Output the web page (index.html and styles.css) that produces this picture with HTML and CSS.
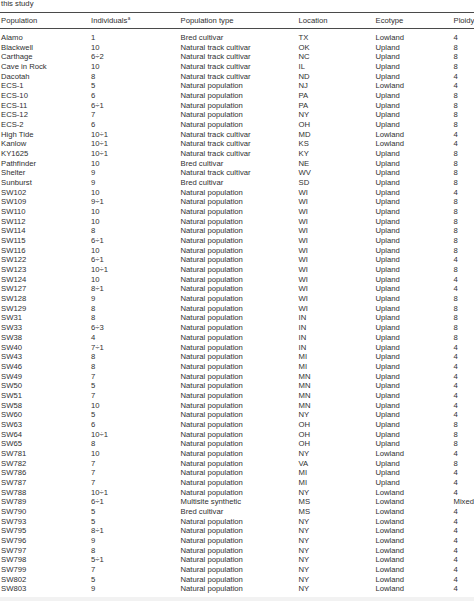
FILE: index.html
```html
<!DOCTYPE html>
<html lang="en">
<head>
<meta charset="utf-8">
<title>Switchgrass populations used in this study</title>
<link rel="stylesheet" href="styles.css">
</head>
<body>
<div class="page">
  <div class="caption">this study</div>
  <div class="table">
    <div class="row head">
      <span>Population</span><span>Individuals<sup>a</sup></span><span>Population type</span><span>Location</span><span>Ecotype</span><span>Ploidy</span>
    </div>
    <div class="body">
      <div class="row"><span>Alamo</span><span>1</span><span>Bred cultivar</span><span>TX</span><span>Lowland</span><span>4</span></div>
      <div class="row"><span>Blackwell</span><span>10</span><span>Natural track cultivar</span><span>OK</span><span>Upland</span><span>8</span></div>
      <div class="row"><span>Carthage</span><span>6÷2</span><span>Natural track cultivar</span><span>NC</span><span>Upland</span><span>8</span></div>
      <div class="row"><span>Cave in Rock</span><span>10</span><span>Natural track cultivar</span><span>IL</span><span>Upland</span><span>8</span></div>
      <div class="row"><span>Dacotah</span><span>8</span><span>Natural track cultivar</span><span>ND</span><span>Upland</span><span>4</span></div>
      <div class="row"><span>ECS-1</span><span>5</span><span>Natural population</span><span>NJ</span><span>Lowland</span><span>4</span></div>
      <div class="row"><span>ECS-10</span><span>6</span><span>Natural population</span><span>PA</span><span>Upland</span><span>8</span></div>
      <div class="row"><span>ECS-11</span><span>6÷1</span><span>Natural population</span><span>PA</span><span>Upland</span><span>8</span></div>
      <div class="row"><span>ECS-12</span><span>7</span><span>Natural population</span><span>NY</span><span>Upland</span><span>8</span></div>
      <div class="row"><span>ECS-2</span><span>6</span><span>Natural population</span><span>OH</span><span>Upland</span><span>8</span></div>
      <div class="row"><span>High Tide</span><span>10÷1</span><span>Natural track cultivar</span><span>MD</span><span>Lowland</span><span>4</span></div>
      <div class="row"><span>Kanlow</span><span>10÷1</span><span>Natural track cultivar</span><span>KS</span><span>Lowland</span><span>4</span></div>
      <div class="row"><span>KY1625</span><span>10÷1</span><span>Natural track cultivar</span><span>KY</span><span>Upland</span><span>8</span></div>
      <div class="row"><span>Pathfinder</span><span>10</span><span>Bred cultivar</span><span>NE</span><span>Upland</span><span>8</span></div>
      <div class="row"><span>Shelter</span><span>9</span><span>Natural track cultivar</span><span>WV</span><span>Upland</span><span>8</span></div>
      <div class="row"><span>Sunburst</span><span>9</span><span>Bred cultivar</span><span>SD</span><span>Upland</span><span>8</span></div>
      <div class="row"><span>SW102</span><span>10</span><span>Natural population</span><span>WI</span><span>Upland</span><span>4</span></div>
      <div class="row"><span>SW109</span><span>9÷1</span><span>Natural population</span><span>WI</span><span>Upland</span><span>8</span></div>
      <div class="row"><span>SW110</span><span>10</span><span>Natural population</span><span>WI</span><span>Upland</span><span>8</span></div>
      <div class="row"><span>SW112</span><span>10</span><span>Natural population</span><span>WI</span><span>Upland</span><span>8</span></div>
      <div class="row"><span>SW114</span><span>8</span><span>Natural population</span><span>WI</span><span>Upland</span><span>8</span></div>
      <div class="row"><span>SW115</span><span>6÷1</span><span>Natural population</span><span>WI</span><span>Upland</span><span>8</span></div>
      <div class="row"><span>SW116</span><span>10</span><span>Natural population</span><span>WI</span><span>Upland</span><span>8</span></div>
      <div class="row"><span>SW122</span><span>6÷1</span><span>Natural population</span><span>WI</span><span>Upland</span><span>4</span></div>
      <div class="row"><span>SW123</span><span>10÷1</span><span>Natural population</span><span>WI</span><span>Upland</span><span>8</span></div>
      <div class="row"><span>SW124</span><span>10</span><span>Natural population</span><span>WI</span><span>Upland</span><span>4</span></div>
      <div class="row"><span>SW127</span><span>8÷1</span><span>Natural population</span><span>WI</span><span>Upland</span><span>4</span></div>
      <div class="row"><span>SW128</span><span>9</span><span>Natural population</span><span>WI</span><span>Upland</span><span>8</span></div>
      <div class="row"><span>SW129</span><span>8</span><span>Natural population</span><span>WI</span><span>Upland</span><span>8</span></div>
      <div class="row"><span>SW31</span><span>8</span><span>Natural population</span><span>IN</span><span>Upland</span><span>8</span></div>
      <div class="row"><span>SW33</span><span>6÷3</span><span>Natural population</span><span>IN</span><span>Upland</span><span>8</span></div>
      <div class="row"><span>SW38</span><span>4</span><span>Natural population</span><span>IN</span><span>Upland</span><span>8</span></div>
      <div class="row"><span>SW40</span><span>7÷1</span><span>Natural population</span><span>IN</span><span>Upland</span><span>4</span></div>
      <div class="row"><span>SW43</span><span>8</span><span>Natural population</span><span>MI</span><span>Upland</span><span>4</span></div>
      <div class="row"><span>SW46</span><span>8</span><span>Natural population</span><span>MI</span><span>Upland</span><span>4</span></div>
      <div class="row"><span>SW49</span><span>7</span><span>Natural population</span><span>MN</span><span>Upland</span><span>4</span></div>
      <div class="row"><span>SW50</span><span>5</span><span>Natural population</span><span>MN</span><span>Upland</span><span>4</span></div>
      <div class="row"><span>SW51</span><span>7</span><span>Natural population</span><span>MN</span><span>Upland</span><span>4</span></div>
      <div class="row"><span>SW58</span><span>10</span><span>Natural population</span><span>MN</span><span>Upland</span><span>4</span></div>
      <div class="row"><span>SW60</span><span>5</span><span>Natural population</span><span>NY</span><span>Upland</span><span>4</span></div>
      <div class="row"><span>SW63</span><span>6</span><span>Natural population</span><span>OH</span><span>Upland</span><span>8</span></div>
      <div class="row"><span>SW64</span><span>10÷1</span><span>Natural population</span><span>OH</span><span>Upland</span><span>8</span></div>
      <div class="row"><span>SW65</span><span>8</span><span>Natural population</span><span>OH</span><span>Upland</span><span>8</span></div>
      <div class="row"><span>SW781</span><span>10</span><span>Natural population</span><span>NY</span><span>Lowland</span><span>4</span></div>
      <div class="row"><span>SW782</span><span>7</span><span>Natural population</span><span>VA</span><span>Upland</span><span>8</span></div>
      <div class="row"><span>SW786</span><span>7</span><span>Natural population</span><span>MI</span><span>Upland</span><span>4</span></div>
      <div class="row"><span>SW787</span><span>7</span><span>Natural population</span><span>MI</span><span>Upland</span><span>4</span></div>
      <div class="row"><span>SW788</span><span>10÷1</span><span>Natural population</span><span>NY</span><span>Lowland</span><span>4</span></div>
      <div class="row"><span>SW789</span><span>6÷1</span><span>Multisite synthetic</span><span>MS</span><span>Lowland</span><span>Mixed</span></div>
      <div class="row"><span>SW790</span><span>5</span><span>Bred cultivar</span><span>MS</span><span>Lowland</span><span>4</span></div>
      <div class="row"><span>SW793</span><span>5</span><span>Natural population</span><span>NY</span><span>Lowland</span><span>4</span></div>
      <div class="row"><span>SW795</span><span>8÷1</span><span>Natural population</span><span>NY</span><span>Lowland</span><span>4</span></div>
      <div class="row"><span>SW796</span><span>9</span><span>Natural population</span><span>NY</span><span>Lowland</span><span>4</span></div>
      <div class="row"><span>SW797</span><span>8</span><span>Natural population</span><span>NY</span><span>Lowland</span><span>4</span></div>
      <div class="row"><span>SW798</span><span>5÷1</span><span>Natural population</span><span>NY</span><span>Lowland</span><span>4</span></div>
      <div class="row"><span>SW799</span><span>7</span><span>Natural population</span><span>NY</span><span>Lowland</span><span>4</span></div>
      <div class="row"><span>SW802</span><span>5</span><span>Natural population</span><span>NY</span><span>Lowland</span><span>4</span></div>
      <div class="row"><span>SW803</span><span>9</span><span>Natural population</span><span>NY</span><span>Lowland</span><span>4</span></div>
    </div>
  </div>
  <div class="band"></div>
</div>
</body>
</html>
```

FILE: styles.css
```css
html, body {
  margin: 0;
  padding: 0;
  background: #ffffff;
  overflow: hidden;
}

.page {
  width: 474px;
  height: 601px;
  overflow: hidden;
  font-family: "Liberation Sans", Arial, sans-serif;
  font-size: 7.7px;
  color: #303030;
  display: flex;
  flex-direction: column;
}

.caption {
  height: 8px;
  line-height: 8px;
  padding-left: 1px;
  white-space: nowrap;
}

.table {
  margin-top: 4px;
  border-top: 1px solid #4a4a4a;
  width: 520px;
}

.row {
  display: grid;
  grid-template-columns: 90px 89.5px 118px 77px 78px 60px;
  padding-left: 1px;
  height: 9.68px;
  line-height: 9.68px;
  white-space: nowrap;
}

.row.head {
  height: 15px;
  line-height: 15px;
  border-bottom: 1px solid #4a4a4a;
}

.row span {
  overflow: visible;
}

.row sup {
  font-size: 4.5px;
  line-height: 0;
  vertical-align: 3px;
  margin-left: 0.5px;
}

.body {
  padding-top: 4px;
}

.band {
  margin-top: 3px;
  flex: 1;
  background: #f2f2f2;
}
```
